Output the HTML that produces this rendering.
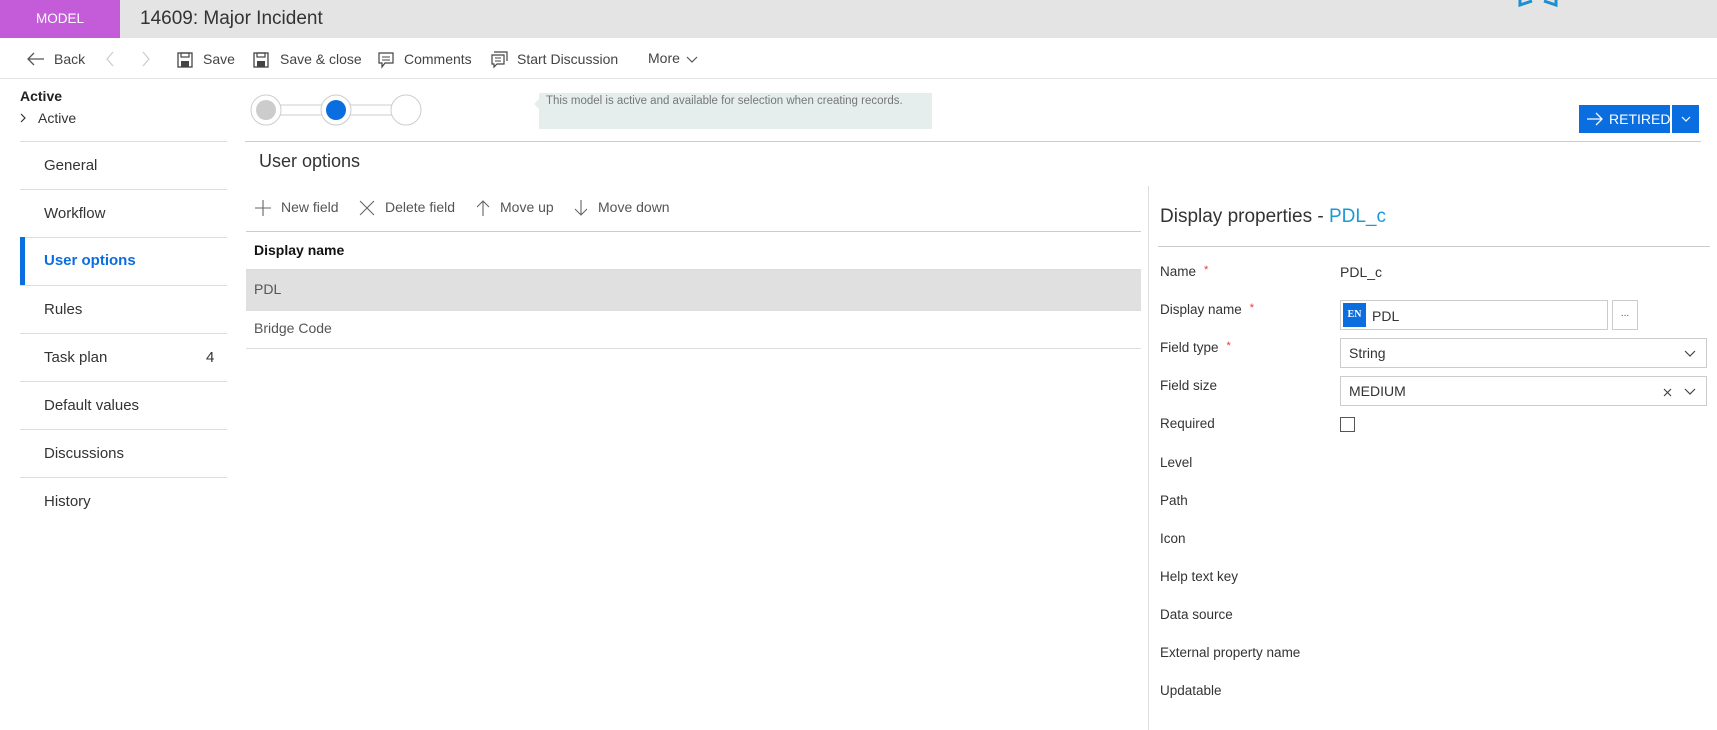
<!DOCTYPE html>
<html><head><meta charset="utf-8"><style>
*{box-sizing:border-box;margin:0;padding:0}
body{width:1717px;height:730px;position:relative;overflow:hidden;background:#fff;font-family:"Liberation Sans",sans-serif;color:#333;font-size:14px}
.a{position:absolute;white-space:nowrap}
.hl{position:absolute;height:1px;background:#ddd}
.lbl{position:absolute;left:1160px;font-size:13.5px;color:#333}
.star{color:#e33;font-size:11px;margin-left:8px;vertical-align:top}
.nav{position:absolute;left:44px;font-size:15px;color:#333}
svg{position:absolute;overflow:visible}
</style></head><body>
<div class="a" style="left:0;top:0;width:1717px;height:38px;background:#e4e4e4"></div>
<div class="a" style="left:0;top:0;width:120px;height:38px;background:#c45bd9;color:#fff;font-size:13.5px;line-height:38px;text-align:center">MODEL</div>
<div class="a" style="left:140px;top:8px;font-size:19px;color:#333">14609: Major Incident</div>
<svg style="left:1518px;top:0" width="40" height="8"><path d="M2 0 L2 5 L14 1 M26 1 L38 5 L38 0" stroke="#1a8fd1" stroke-width="3" fill="none"/></svg>

<!-- toolbar -->
<svg style="left:27px;top:52px" width="18" height="14"><path d="M1 7H17M7 1L1 7L7 13" stroke="#555" stroke-width="1.3" fill="none"/></svg>
<div class="a" style="left:54px;top:51px;font-size:14px;color:#444">Back</div>
<svg style="left:105px;top:51px" width="10" height="16"><path d="M8 1L2 8L8 15" stroke="#ccc" stroke-width="1.2" fill="none"/></svg>
<svg style="left:141px;top:51px" width="10" height="16"><path d="M2 1L8 8L2 15" stroke="#ccc" stroke-width="1.2" fill="none"/></svg>
<svg style="left:177px;top:52px" width="16" height="16"><rect x="1" y="1" width="14" height="14" fill="none" stroke="#444" stroke-width="1.3"/><rect x="4" y="1" width="8" height="4" fill="none" stroke="#444" stroke-width="1.2"/><rect x="4" y="9" width="8" height="6" fill="#444"/></svg>
<div class="a" style="left:203px;top:51px;color:#444">Save</div>
<svg style="left:253px;top:52px" width="16" height="16"><rect x="1" y="1" width="14" height="14" fill="none" stroke="#444" stroke-width="1.3"/><rect x="4" y="1" width="8" height="4" fill="none" stroke="#444" stroke-width="1.2"/><rect x="4" y="9" width="8" height="6" fill="#444"/></svg>
<div class="a" style="left:280px;top:51px;color:#444">Save &amp; close</div>
<svg style="left:377px;top:52px" width="18" height="18"><path d="M2 1H16V11H8L5 15V11H2Z" fill="none" stroke="#444" stroke-width="1.2"/><path d="M5 5H13M5 8H13" stroke="#444"/></svg>
<div class="a" style="left:404px;top:51px;color:#444">Comments</div>
<svg style="left:490px;top:51px" width="18" height="18"><path d="M4 1H17V10M2 4H14V13H7L4 16V13H2Z" fill="none" stroke="#444" stroke-width="1.2"/><path d="M5 7H11M5 10H11" stroke="#444"/></svg>
<div class="a" style="left:517px;top:51px;color:#444">Start Discussion</div>
<div class="a" style="left:648px;top:50px;color:#444">More</div>
<svg style="left:686px;top:56px" width="12" height="8"><path d="M1 1L6 6L11 1" stroke="#555" stroke-width="1.2" fill="none"/></svg>
<div class="hl" style="left:0;top:78px;width:1717px;background:#e2e2e2"></div>

<!-- sidebar -->
<div class="a" style="left:20px;top:88px;font-size:14px;font-weight:bold;color:#222">Active</div>
<svg style="left:20px;top:113px" width="6" height="10"><path d="M1 1L5 5L1 9" stroke="#333" stroke-width="1.2" fill="none"/></svg>
<div class="a" style="left:38px;top:110px;font-size:14px;color:#333">Active</div>
<div class="hl" style="left:20px;top:141px;width:207px"></div>
<div class="nav" style="top:157px">General</div>
<div class="hl" style="left:20px;top:189px;width:207px"></div>
<div class="nav" style="top:205px">Workflow</div>
<div class="hl" style="left:20px;top:237px;width:207px"></div>
<div class="a" style="left:20px;top:237px;width:5px;height:48px;background:#0b6ee0"></div>
<div class="nav" style="top:252px;color:#0b6ee0;font-weight:bold">User options</div>
<div class="hl" style="left:20px;top:285px;width:207px"></div>
<div class="nav" style="top:301px">Rules</div>
<div class="hl" style="left:20px;top:333px;width:207px"></div>
<div class="nav" style="top:349px">Task plan</div>
<div class="a" style="left:206px;top:349px;font-size:15px">4</div>
<div class="hl" style="left:20px;top:381px;width:207px"></div>
<div class="nav" style="top:397px">Default values</div>
<div class="hl" style="left:20px;top:429px;width:207px"></div>
<div class="nav" style="top:445px">Discussions</div>
<div class="hl" style="left:20px;top:477px;width:207px"></div>
<div class="nav" style="top:493px">History</div>

<!-- steps -->
<svg style="left:250px;top:94px" width="180" height="34">
<rect x="16" y="11" width="140" height="10" fill="#fff" stroke="#ccc"/>
<circle cx="16" cy="16" r="15" fill="#fff" stroke="#ccc"/><circle cx="16" cy="16" r="10" fill="#ccc"/>
<circle cx="86" cy="16" r="15" fill="#fff" stroke="#ccc"/><circle cx="86" cy="16" r="10" fill="#0b6ee0"/>
<circle cx="156" cy="16" r="15" fill="#fff" stroke="#ccc"/>
</svg>
<div class="a" style="left:539px;top:93px;width:393px;height:36px;background:#e5eeec"></div>
<svg style="left:533px;top:98px" width="8" height="12"><path d="M7 0L1 6L7 12Z" fill="#e5eeec"/></svg>
<div class="a" style="left:546px;top:95px;font-size:11.5px;color:#777">This model is active and available for selection when creating records.</div>

<div class="a" style="left:1579px;top:105px;width:91px;height:28px;background:#0b6ee0;color:#fff;font-size:14px;line-height:28px;padding-left:30px">RETIRED</div>
<svg style="left:1586px;top:112px" width="18" height="14"><path d="M1 7H16M10 1L16 7L10 13" stroke="#fff" stroke-width="1.3" fill="none"/></svg>
<div class="a" style="left:1672px;top:105px;width:27px;height:28px;background:#0b6ee0"></div>
<svg style="left:1681px;top:116px" width="10" height="7"><path d="M1 1L5 5L9 1" stroke="#fff" stroke-width="1.2" fill="none"/></svg>
<div class="hl" style="left:245px;top:141px;width:1456px;background:#ccc"></div>

<!-- middle -->
<div class="a" style="left:259px;top:151px;font-size:18px;color:#333">User options</div>
<svg style="left:255px;top:200px" width="16" height="16"><path d="M8 0V16M0 8H16" stroke="#666" stroke-width="1.1"/></svg>
<div class="a" style="left:281px;top:199px;font-size:14px;color:#555">New field</div>
<svg style="left:359px;top:200px" width="16" height="16"><path d="M1 1L15 15M15 1L1 15" stroke="#666" stroke-width="1.1"/></svg>
<div class="a" style="left:385px;top:199px;font-size:14px;color:#555">Delete field</div>
<svg style="left:476px;top:200px" width="14" height="16"><path d="M7 1V16M1 7L7 1L13 7" stroke="#666" stroke-width="1.1" fill="none"/></svg>
<div class="a" style="left:500px;top:199px;font-size:14px;color:#555">Move up</div>
<svg style="left:574px;top:200px" width="14" height="16"><path d="M7 0V15M1 9L7 15L13 9" stroke="#666" stroke-width="1.1" fill="none"/></svg>
<div class="a" style="left:598px;top:199px;font-size:14px;color:#555">Move down</div>
<div class="hl" style="left:246px;top:231px;width:895px;background:#ccc"></div>
<div class="a" style="left:254px;top:242px;font-size:14px;font-weight:bold;color:#111">Display name</div>
<div class="hl" style="left:246px;top:269px;width:895px"></div>
<div class="a" style="left:246px;top:270px;width:895px;height:40px;background:#e0e0e0"></div>
<div class="a" style="left:254px;top:281px;font-size:14px;color:#555">PDL</div>
<div class="hl" style="left:246px;top:310px;width:895px"></div>
<div class="a" style="left:254px;top:320px;font-size:14px;color:#555">Bridge Code</div>
<div class="hl" style="left:246px;top:348px;width:895px"></div>

<!-- right panel -->
<div class="a" style="left:1148px;top:186px;width:1px;height:544px;background:#ddd"></div>
<div class="a" style="left:1160px;top:206px;font-size:19px;color:#333">Display properties - <span style="color:#1a9ad6">PDL_c</span></div>
<div class="hl" style="left:1158px;top:246px;width:1552px;width:552px;background:#ccc"></div>
<div class="lbl" style="top:264px">Name<span class="star">*</span></div>
<div class="a" style="left:1340px;top:264px;font-size:14px">PDL_c</div>
<div class="lbl" style="top:302px">Display name<span class="star">*</span></div>
<div class="a" style="left:1340px;top:300px;width:268px;height:30px;border:1px solid #ccc"></div>
<div class="a" style="left:1343px;top:303px;width:23px;height:24px;background:#0b6ee0;color:#fff;font-family:'Liberation Serif',serif;font-weight:bold;font-size:10px;line-height:24px;text-align:center">EN</div>
<div class="a" style="left:1372px;top:308px;font-size:14px">PDL</div>
<div class="a" style="left:1612px;top:300px;width:26px;height:30px;border:1px solid #ccc;font-size:10px;text-align:center;line-height:26px;color:#555">...</div>
<div class="lbl" style="top:340px">Field type<span class="star">*</span></div>
<div class="a" style="left:1340px;top:338px;width:367px;height:30px;border:1px solid #ccc"></div>
<div class="a" style="left:1349px;top:345px;font-size:14px">String</div>
<svg style="left:1684px;top:350px" width="12" height="8"><path d="M1 1L6 6L11 1" stroke="#444" stroke-width="1.2" fill="none"/></svg>
<div class="lbl" style="top:378px">Field size</div>
<div class="a" style="left:1340px;top:376px;width:367px;height:30px;border:1px solid #ccc"></div>
<div class="a" style="left:1349px;top:383px;font-size:14px">MEDIUM</div>
<svg style="left:1663px;top:388px" width="9" height="9"><path d="M1 1L8 8M8 1L1 8" stroke="#444" stroke-width="1.2"/></svg>
<svg style="left:1684px;top:388px" width="12" height="8"><path d="M1 1L6 6L11 1" stroke="#444" stroke-width="1.2" fill="none"/></svg>
<div class="lbl" style="top:416px">Required</div>
<div class="a" style="left:1340px;top:417px;width:15px;height:15px;border:1px solid #555"></div>
<div class="lbl" style="top:455px">Level</div>
<div class="lbl" style="top:493px">Path</div>
<div class="lbl" style="top:531px">Icon</div>
<div class="lbl" style="top:569px">Help text key</div>
<div class="lbl" style="top:607px">Data source</div>
<div class="lbl" style="top:645px">External property name</div>
<div class="lbl" style="top:683px">Updatable</div>
</body></html>
